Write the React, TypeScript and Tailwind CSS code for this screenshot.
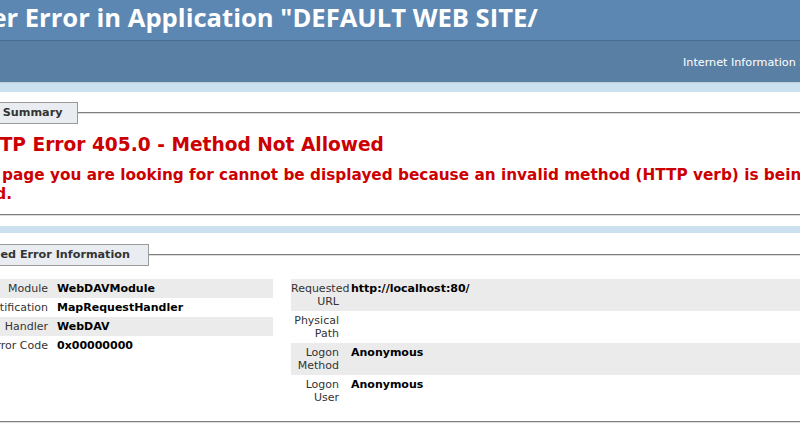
import React from "react";

function Groove() {
  return <div className="h-0 border-t border-b border-t-[#7f7f7f] border-b-[#dcdcdc]" />;
}

function Legend({ text, shift }: { text: string; shift: string }) {
  return (
    <div className="flex items-center">
      <div
        className={`${shift} h-[22px] shrink-0 whitespace-nowrap border border-[#9a9a9a] bg-[#E9EDF1] pl-[10px] pt-[3px] text-[11.2px] font-bold leading-[14px] text-[#333333]`}
      >
        {text}
      </div>
      <div className="flex-1">
        <Groove />
      </div>
    </div>
  );
}

const leftRows: [string, string][] = [
  ["Module", "WebDAVModule"],
  ["Notification", "MapRequestHandler"],
  ["Handler", "WebDAV"],
  ["Error Code", "0x00000000"],
];

const rightRows: [string[], string][] = [
  [["Requested", "URL"], "http://localhost:80/"],
  [["Physical", "Path"], ""],
  [["Logon", "Method"], "Anonymous"],
  [["Logon", "User"], "Anonymous"],
];

export default function App() {
  return (
    <div className="h-[430px] w-[800px] overflow-hidden bg-[#CBE1EF] font-['DejaVu_Sans',Verdana,sans-serif] text-[11px] text-black">
      {/* header */}
      <div className="h-[40px] overflow-hidden bg-[#5C87B2]">
        <h1 className="-ml-[64px] pt-[1px] whitespace-nowrap font-['Open_Sans',sans-serif] text-[25.6px] font-bold leading-[34px] text-white">
          Server Error in Application "DEFAULT WEB SITE/
        </h1>
      </div>
      <div className="h-[43px] overflow-hidden whitespace-nowrap border-t border-b border-t-[#4A6C8E] border-b-[#C1CFDD] bg-[#5A7FA5] pl-[683px] pt-[15px] text-[11.2px] font-normal leading-[13px] text-white">
        Internet Information Services 7.5
      </div>

      {/* summary */}
      <div className="mt-[9px] h-[134px] overflow-hidden bg-white pt-[10px]">
        <Legend text="Error Summary" shift="-ml-[44px] pr-[15px]" />
        <h2 className="-ml-[29px] mt-[10px] whitespace-nowrap text-[18.6px] font-bold leading-[22px] text-[#CC0000]">
          HTTP Error 405.0 - Method Not Allowed
        </h2>
        <h3 className="-ml-[35px] mt-[10px] whitespace-nowrap text-[15.3px] font-bold leading-[19px] text-[#CC0000]">
          The page you are looking for cannot be displayed because an invalid method (HTTP verb) is being
          <br />
          used.
        </h3>
        <div className="mt-[10px]">
          <Groove />
        </div>
      </div>

      {/* details */}
      <div className="mt-[7px] h-[200px] overflow-hidden bg-white pt-[11px]">
        <Legend text="Detailed Error Information" shift="-ml-[48px] pr-[18px]" />
        <div className="mt-[13px] flex items-start">
          <div className="-ml-[52px] w-[325px] shrink-0">
            {leftRows.map(([k, v], i) => (
              <div
                key={k}
                className={`grid grid-cols-[100px_1fr] gap-x-[9px] py-[3px] leading-[13px] ${i % 2 === 0 ? "bg-[#EBEBEB]" : "bg-white"}`}
              >
                <div className="whitespace-nowrap text-right text-[#333333]">{k}</div>
                <div className="whitespace-nowrap font-bold">{v}</div>
              </div>
            ))}
          </div>
          <div className="ml-[18px] flex-1">
            {rightRows.map(([k, v], i) => (
              <div
                key={i}
                className={`grid h-[32px] grid-cols-[48px_1fr] gap-x-[12px] py-[3px] leading-[13px] ${i % 2 === 0 ? "bg-[#EBEBEB]" : "bg-white"}`}
              >
                <div className="text-right text-[#333333]">
                  <div className={k[0].length > 8 ? "whitespace-nowrap text-left" : ""}>{k[0]}</div>
                  <div>{k[1]}</div>
                </div>
                <div className="whitespace-nowrap font-bold">{v}</div>
              </div>
            ))}
          </div>
        </div>
        <div className="mt-[14px]">
          <Groove />
        </div>
      </div>
    </div>
  );
}
